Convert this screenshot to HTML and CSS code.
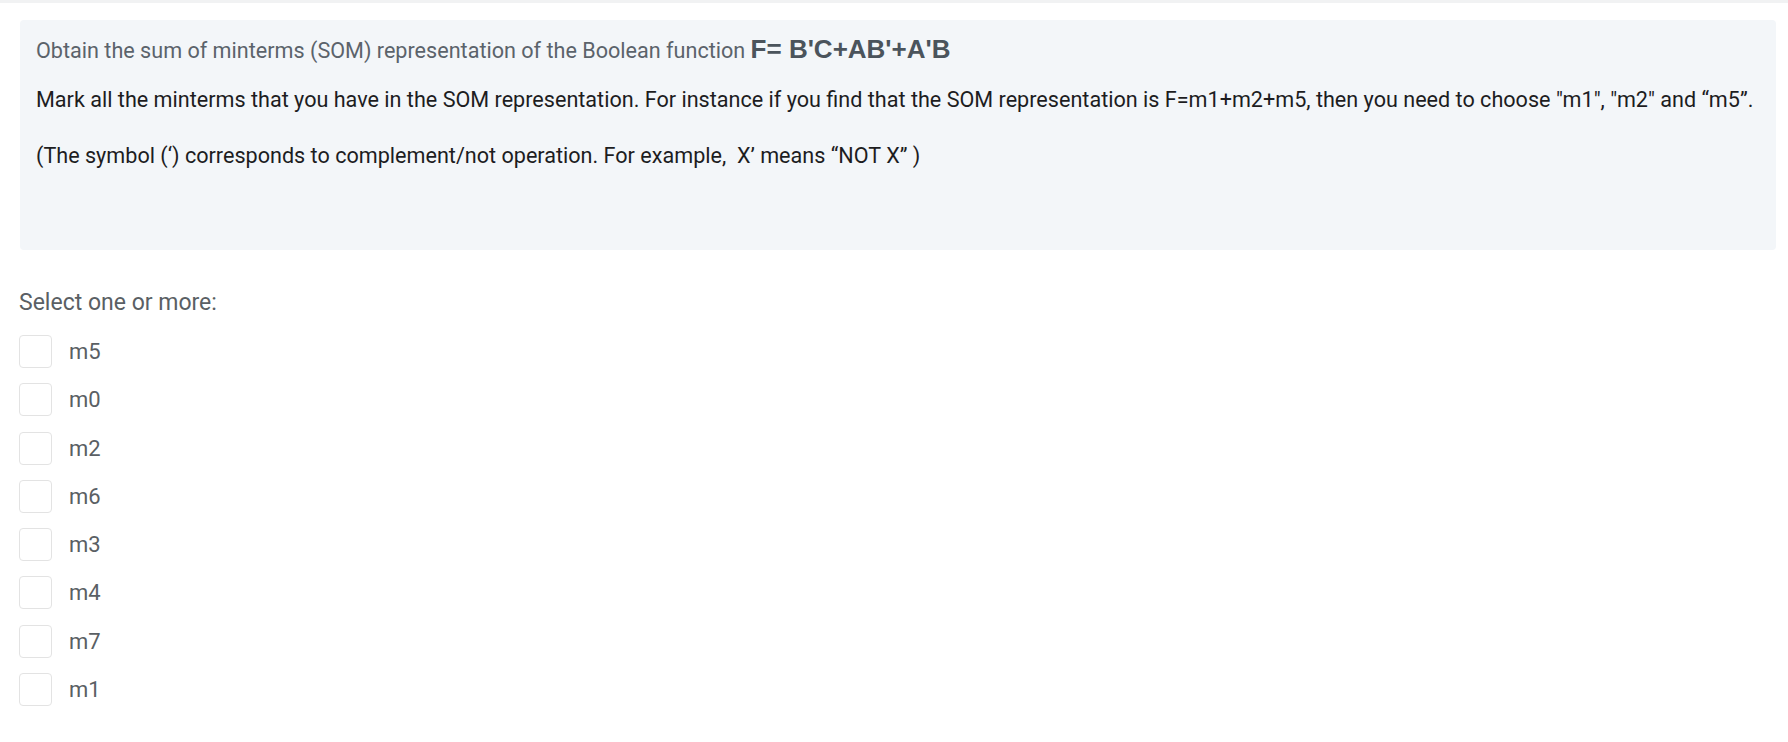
FILE: index.html
```html
<!DOCTYPE html>
<html>
<head>
<meta charset="utf-8">
<link rel="stylesheet" href="styles.css">
</head>
<body>
<div class="topbar"></div>
<div class="question">
  <div class="formulation">
    <p class="p-title">Obtain the sum of minterms (SOM) representation of the Boolean function <strong class="formula">F= B'C+AB'+A'B</strong></p>
    <p class="p-main">Mark all the minterms that you have in the SOM representation. For instance if you find that the SOM representation is F=m1+m2+m5, then you need to choose "m1", "m2" and “m5”.</p>
    <p class="p-main p-note">(The symbol (‘) corresponds to complement/not operation. For example,&nbsp; X’ means “NOT X” )</p>
  </div>
  <div class="answer">
    <div class="prompt">Select one or more:</div>
    <label class="opt"><span class="box"></span><span class="lbl">m5</span></label>
    <label class="opt"><span class="box"></span><span class="lbl">m0</span></label>
    <label class="opt"><span class="box"></span><span class="lbl">m2</span></label>
    <label class="opt"><span class="box"></span><span class="lbl">m6</span></label>
    <label class="opt"><span class="box"></span><span class="lbl">m3</span></label>
    <label class="opt"><span class="box"></span><span class="lbl">m4</span></label>
    <label class="opt"><span class="box"></span><span class="lbl">m7</span></label>
    <label class="opt"><span class="box"></span><span class="lbl">m1</span></label>
  </div>
</div>
</body>
</html>
```
FILE: styles.css
```css
html, body {
  margin: 0;
  padding: 0;
  background: #ffffff;
}
body {
  font-family: Roboto, "Liberation Sans", sans-serif;
  font-size: 21.6px;
  color: #1d2125;
}
.topbar {
  height: 3px;
  background: #f1f2f3;
}
.question {
  margin: 17px 12px 0 20px;
}
.formulation {
  background: #f3f6f9;
  border-radius: 4px;
  padding: 9px 16px 0 16px;
  height: 230px;
  box-sizing: border-box;
}
.formulation p {
  margin: 0;
  line-height: 30px;
}
.p-title {
  color: #5b636b;
  padding-top: 5px;
}
.formula {
  font-family: "Liberation Sans", Arial, sans-serif;
  font-weight: bold;
  font-size: 26px;
  color: #4b545c;
}
.p-main {
  margin-top: 19px !important;
  color: #1d1d1f;
}
.p-note {
  margin-top: 26px !important;
}
.answer {
  padding-top: 38px;
}
.prompt {
  color: #5a5f64;
  font-size: 23px;
  line-height: 30px;
  margin-left: -1px;
  margin-bottom: 17px;
}
.opt {
  display: flex;
  align-items: center;
  height: 33px;
  margin-bottom: 15.3px;
}
.box {
  width: 31px;
  height: 31px;
  border: 1px solid #e3e3e3;
  border-radius: 4px;
  background: #fff;
  margin-left: -1px;
  flex: none;
}
.lbl {
  margin-left: 17px;
  font-size: 22px;
  color: #5a5f64;
}
```
